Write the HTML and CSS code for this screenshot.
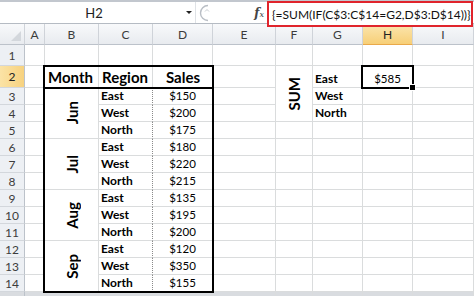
FILE: index.html
```html
<!DOCTYPE html>
<html>
<head>
<meta charset="utf-8">
<link rel="stylesheet" href="styles.css">
</head>
<body>
<div class="fbar">
  <div class="namebox"><span class="nm">H2</span><span class="dd"></span></div>
  <div class="mid">
    <svg class="split" width="14" height="18" viewBox="0 0 14 18"><path d="M10 1.5 A7.5 7.5 0 0 0 10 16.5" fill="none" stroke="#b9bec5" stroke-width="1.4"/><path d="M7 7.5 L9 5.5 L11 7.5" fill="none" stroke="#c8ccd1" stroke-width="1"/></svg>
    <span class="fx"><i>f</i><small>x</small></span>
  </div>
  <div class="formula">{=SUM(IF(C$3:C$14=G2,D$3:D$14))}</div>
</div>
<div class="sheet">
  <div class="grid">
    <div class="hd corner"><span class="tri"></span></div><div class="hd">A</div><div class="hd">B</div><div class="hd">C</div><div class="hd">D</div><div class="hd">E</div><div class="hd">F</div><div class="hd">G</div><div class="hd hsel">H</div><div class="hd">I</div>

    <div class="rh">1</div><div class="c"></div><div class="c"></div><div class="c"></div><div class="c"></div><div class="c"></div><div class="c"></div><div class="c"></div><div class="c"></div><div class="c"></div>

    <div class="rh rsel">2</div><div class="c"></div><div class="c th">Month</div><div class="c th">Region</div><div class="c th ctr">Sales</div><div class="c"></div><div class="c vert sum"><span>SUM</span></div><div class="c b">East</div><div class="c num">$585</div><div class="c"></div>

    <div class="rh">3</div><div class="c"></div><div class="c vert m1"><span>Jun</span></div><div class="c b dot">East</div><div class="c num">$150</div><div class="c"></div><div class="c b">West</div><div class="c"></div><div class="c"></div>
    <div class="rh">4</div><div class="c"></div><div class="c b dot">West</div><div class="c num">$200</div><div class="c"></div><div class="c b">North</div><div class="c"></div><div class="c"></div>
    <div class="rh">5</div><div class="c"></div><div class="c b dot">North</div><div class="c num">$175</div><div class="c"></div><div class="c"></div><div class="c"></div><div class="c"></div><div class="c"></div>

    <div class="rh">6</div><div class="c"></div><div class="c vert m2"><span>Jul</span></div><div class="c b dot">East</div><div class="c num">$180</div><div class="c"></div><div class="c"></div><div class="c"></div><div class="c"></div><div class="c"></div>
    <div class="rh">7</div><div class="c"></div><div class="c b dot">West</div><div class="c num">$220</div><div class="c"></div><div class="c"></div><div class="c"></div><div class="c"></div><div class="c"></div>
    <div class="rh">8</div><div class="c"></div><div class="c b dot">North</div><div class="c num">$215</div><div class="c"></div><div class="c"></div><div class="c"></div><div class="c"></div><div class="c"></div>

    <div class="rh">9</div><div class="c"></div><div class="c vert m3"><span>Aug</span></div><div class="c b dot">East</div><div class="c num">$135</div><div class="c"></div><div class="c"></div><div class="c"></div><div class="c"></div><div class="c"></div>
    <div class="rh">10</div><div class="c"></div><div class="c b dot">West</div><div class="c num">$195</div><div class="c"></div><div class="c"></div><div class="c"></div><div class="c"></div><div class="c"></div>
    <div class="rh">11</div><div class="c"></div><div class="c b dot">North</div><div class="c num">$200</div><div class="c"></div><div class="c"></div><div class="c"></div><div class="c"></div><div class="c"></div>

    <div class="rh">12</div><div class="c"></div><div class="c vert m4"><span>Sep</span></div><div class="c b dot">East</div><div class="c num">$120</div><div class="c"></div><div class="c"></div><div class="c"></div><div class="c"></div><div class="c"></div>
    <div class="rh">13</div><div class="c"></div><div class="c b dot">West</div><div class="c num">$350</div><div class="c"></div><div class="c"></div><div class="c"></div><div class="c"></div><div class="c"></div>
    <div class="rh">14</div><div class="c"></div><div class="c b dot">North</div><div class="c num">$155</div><div class="c"></div><div class="c"></div><div class="c"></div><div class="c"></div><div class="c"></div>

    <div class="rh last"></div><div class="c last"></div><div class="c last"></div><div class="c last"></div><div class="c last"></div><div class="c last"></div><div class="c last"></div><div class="c last"></div><div class="c last"></div><div class="c last"></div>
  </div>
  <div class="frames">
    <div class="tbl"></div>
    <div class="thead"></div>
    <div class="selbox"><span class="handle"></span></div>
  </div>
</div>
</body>
</html>
```

FILE: styles.css
```css
html, body {
  margin: 0;
  padding: 0;
}
body {
  width: 474px;
  height: 296px;
  overflow: hidden;
  background: #fff;
  font-family: Lato, "Liberation Sans", sans-serif;
  color: #000;
}

/* formula bar */
.fbar {
  display: flex;
  height: 24px;
  box-sizing: border-box;
  border-top: 2px solid #c2c7ce;
  border-bottom: 1px solid #b5bbc3;
  background: #fff;
  position: relative;
  z-index: 3;
}
.namebox {
  width: 196px;
  display: flex;
  align-items: center;
  border-right: 1px solid #dfe2e6;
  box-sizing: border-box;
}
.nm {
  flex: 1;
  text-align: center;
  font-size: 13px;
  color: #1e1e1e;
  padding-left: 2px;
}
.dd {
  width: 0;
  height: 0;
  border-left: 3px solid transparent;
  border-right: 3px solid transparent;
  border-top: 3px solid #222;
  margin-right: 3px;
}
.mid {
  width: 71px;
  display: flex;
  align-items: center;
  justify-content: space-between;
  padding: 0 2px 0 2px;
  box-sizing: border-box;
}
.fx {
  font-family: "DejaVu Serif", serif;
  font-size: 12px;
  color: #444;
  margin-right: 1px;
}
.fx i { font-style: italic; font-weight: bold; }
.fx small { font-size: 8px; font-style: italic; }
.formula {
  flex: 1;
  margin: -1px 1px -4px 0;
  border: 2px solid #e0242c;
  background: #fff;
  display: flex;
  align-items: center;
  padding-left: 3px;
  font-size: 12px;
  color: #111;
  white-space: nowrap;
}

/* sheet */
.sheet {
  position: relative;
  height: 272px;
}
.grid, .frames {
  display: grid;
  height: 272px;
  grid-template-columns: 25px 20px 54px 54px 60px 63px 37px 50px 50px 1fr;
  grid-template-rows: 21px 21px 22px repeat(12, 17px) 1fr;
}
.frames {
  position: absolute;
  inset: 0;
  pointer-events: none;
}
.hd, .rh, .c {
  box-sizing: border-box;
  border-right: 1px solid #dadcdd;
  border-bottom: 1px solid #dadcdd;
  min-width: 0;
  min-height: 0;
}
.hd {
  background: linear-gradient(#f8f9fb, #e8ebef);
  border-right-color: #cfd3d9;
  border-bottom-color: #bcc2ca;
  font-size: 12px;
  color: #3c3c3c;
  display: flex;
  align-items: center;
  justify-content: center;
}
.corner {
  align-items: flex-end;
  justify-content: flex-end;
  padding: 0 3px 3px 0;
}
.tri {
  width: 0;
  height: 0;
  border-left: 10px solid transparent;
  border-bottom: 10px solid #d3d7dc;
}
.hsel {
  background: linear-gradient(#fbe6b0, #f7cf77);
  border-bottom-color: #e9a94a;
  color: #222;
}
.rh {
  background: #edf0f4;
  border-right-color: #bcc2ca;
  border-bottom-color: #d3d7dc;
  font-size: 12px;
  color: #3c3c3c;
  display: flex;
  align-items: center;
  justify-content: center;
}
.rsel {
  background: linear-gradient(90deg, #fbe3a6, #f7d27f);
  color: #222;
}
.c {
  background: #fff;
  display: flex;
  align-items: flex-end;
  padding: 0 2px 1px 2px;
  font-size: 12px;
  line-height: 15px;
  white-space: nowrap;
}
.last {
  background: #d9dce0;
  border-bottom: 0;
}
.b { font-weight: bold; }
.th {
  font-weight: bold;
  font-size: 15px;
  line-height: 18px;
  padding-left: 3px;
}
.ctr { justify-content: center; }
.num {
  justify-content: center;
  font-size: 11.5px;
}
.dot { border-right: 1px dotted #8a8a8a; }
.vert {
  align-items: center;
  justify-content: center;
  padding: 0;
  font-weight: bold;
  font-size: 15px;
}
.vert span {
  writing-mode: vertical-rl;
  transform: rotate(180deg);
  line-height: 16px;
}
.m1 { grid-column: 3; grid-row: 4 / span 3; }
.m2 { grid-column: 3; grid-row: 7 / span 3; }
.m3 { grid-column: 3; grid-row: 10 / span 3; }
.m4 { grid-column: 3; grid-row: 13 / span 3; }
.sum { grid-column: 7; grid-row: 3 / span 3; }

.tbl {
  grid-column: 3 / 6;
  grid-row: 3 / 16;
  margin: -1px -1px -1px -2px;
  border: 2px solid #000;
}
.thead {
  grid-column: 3 / 6;
  grid-row: 3 / 4;
  margin: 0 0 -1px 0;
  border-bottom: 2px solid #000;
}
.selbox {
  grid-column: 9 / 10;
  grid-row: 3 / 4;
  margin: -1px -1px -1px -2px;
  border: 2px solid #000;
  position: relative;
}
.handle {
  position: absolute;
  right: -4px;
  bottom: -4px;
  width: 5px;
  height: 5px;
  background: #000;
  border: 1px solid #fff;
}
```
